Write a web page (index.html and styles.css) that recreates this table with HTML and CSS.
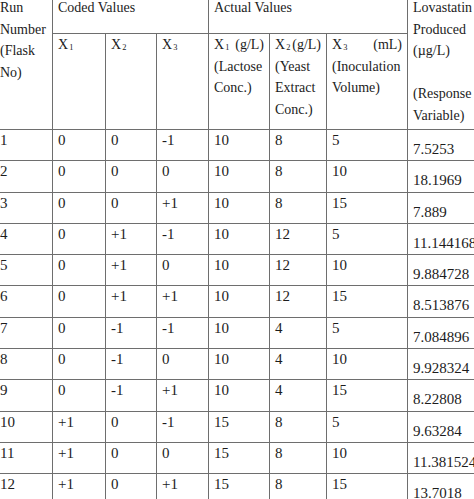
FILE: index.html
```html
<!DOCTYPE html>
<html>
<head>
<meta charset="utf-8">
<link rel="stylesheet" href="styles.css">
</head>
<body>
<table class="data">
<colgroup>
<col class="c-run"><col class="c-x1"><col class="c-x2"><col class="c-x3"><col class="c-a1"><col class="c-a2"><col class="c-a3"><col class="c-lov">
</colgroup>
<thead>
<tr class="h1">
<th rowspan="2">Run<br>Number<br>(Flask<br>No)</th>
<th colspan="3">Coded Values</th>
<th colspan="3">Actual Values</th>
<th rowspan="2">Lovastatin<br>Produced<br>(µg/L)<br><br>(Response<br>Variable)</th>
</tr>
<tr class="h2">
<th>X<sub>1</sub></th>
<th>X<sub>2</sub></th>
<th>X<sub>3</sub></th>
<th><div class="split"><span>X<sub>1</sub></span><span>(g/L)</span></div>(Lactose<br>Conc.)</th>
<th><div class="split"><span>X<sub>2</sub></span><span>(g/L)</span></div>(Yeast<br>Extract<br>Conc.)</th>
<th><div class="split"><span>X<sub>3</sub></span><span>(mL)</span></div>(Inoculation<br>Volume)</th>
</tr>
</thead>
<tbody>
<tr><td>1</td><td>0</td><td>0</td><td>-1</td><td>10</td><td>8</td><td>5</td><td class="resp">7.5253</td></tr>
<tr><td>2</td><td>0</td><td>0</td><td>0</td><td>10</td><td>8</td><td>10</td><td class="resp">18.1969</td></tr>
<tr><td>3</td><td>0</td><td>0</td><td>+1</td><td>10</td><td>8</td><td>15</td><td class="resp">7.889</td></tr>
<tr><td>4</td><td>0</td><td>+1</td><td>-1</td><td>10</td><td>12</td><td>5</td><td class="resp">11.144168</td></tr>
<tr><td>5</td><td>0</td><td>+1</td><td>0</td><td>10</td><td>12</td><td>10</td><td class="resp">9.884728</td></tr>
<tr><td>6</td><td>0</td><td>+1</td><td>+1</td><td>10</td><td>12</td><td>15</td><td class="resp">8.513876</td></tr>
<tr><td>7</td><td>0</td><td>-1</td><td>-1</td><td>10</td><td>4</td><td>5</td><td class="resp">7.084896</td></tr>
<tr><td>8</td><td>0</td><td>-1</td><td>0</td><td>10</td><td>4</td><td>10</td><td class="resp">9.928324</td></tr>
<tr><td>9</td><td>0</td><td>-1</td><td>+1</td><td>10</td><td>4</td><td>15</td><td class="resp">8.22808</td></tr>
<tr><td>10</td><td>+1</td><td>0</td><td>-1</td><td>15</td><td>8</td><td>5</td><td class="resp">9.63284</td></tr>
<tr><td>11</td><td>+1</td><td>0</td><td>0</td><td>15</td><td>8</td><td>10</td><td class="resp">11.381524</td></tr>
<tr><td>12</td><td>+1</td><td>0</td><td>+1</td><td>15</td><td>8</td><td>15</td><td class="resp">13.7018</td></tr>
</tbody>
</table>
</body>
</html>
```

FILE: styles.css
```css
html, body {
  margin: 0;
  padding: 0;
  background: #ffffff;
  overflow: hidden;
}
body {
  width: 474px;
  height: 499px;
  font-family: "Liberation Serif", "Times New Roman", serif;
  color: #1c1c1c;
}
.data {
  border-collapse: collapse;
  table-layout: fixed;
  width: 498px;
  margin: -4px 0 0 -6px;
}
.c-run { width: 58px; }
.c-x1 { width: 53px; }
.c-x2 { width: 51px; }
.c-x3 { width: 52px; }
.c-a1 { width: 61px; }
.c-a2 { width: 57px; }
.c-a3 { width: 81px; }
.c-lov { width: 85px; }
.data th, .data td {
  border: 1px solid #6e6e6e;
  padding: 0 5px;
  text-align: left;
  vertical-align: top;
  font-weight: normal;
  white-space: nowrap;
}
.data th {
  font-size: 14px;
  line-height: 21.5px;
}
.data td {
  font-size: 15px;
  line-height: 18px;
  height: 31.3px;
  box-sizing: border-box;
  padding-top: 1px;
}
.data td.resp { padding-top: 10px; }
.h1 th { height: 36px; }
.h2 th { height: 95px; }
.split {
  display: flex;
  justify-content: space-between;
}
sub {
  font-size: 0.6em;
  line-height: 0;
  vertical-align: -0.12em;
  margin-left: 1px;
}
```
